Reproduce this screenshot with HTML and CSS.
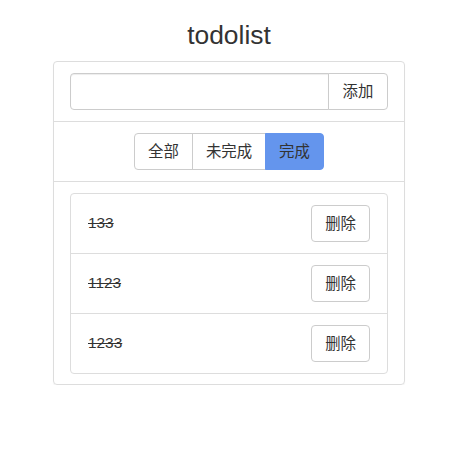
FILE: index.html
```html
<!DOCTYPE html>
<html lang="zh">
<head>
<meta charset="utf-8">
<title>todolist</title>
<link rel="stylesheet" href="styles.css">
</head>
<body>
<div class="wrap">
  <h3 class="title">todolist</h3>
  <div class="panel">
    <div class="panel-body">
      <div class="input-group">
        <input class="form-control" type="text">
        <button class="btn btn-add" type="button">添加</button>
      </div>
    </div>
    <div class="panel-body filters">
      <div class="btn-group">
        <button class="btn" type="button">全部</button>
        <button class="btn" type="button">未完成</button>
        <button class="btn active" type="button">完成</button>
      </div>
    </div>
    <div class="panel-body list-body">
      <ul class="list-group">
        <li class="list-group-item"><span class="done">133</span><button class="btn" type="button">删除</button></li>
        <li class="list-group-item"><span class="done">1123</span><button class="btn" type="button">删除</button></li>
        <li class="list-group-item"><span class="done">1233</span><button class="btn" type="button">删除</button></li>
      </ul>
    </div>
  </div>
</div>
</body>
</html>
```
FILE: styles.css
```css
* { box-sizing: border-box; }
body {
  margin: 0;
  font-family: "Liberation Sans", "Noto Sans CJK SC", sans-serif;
  font-size: 15.4px;
  line-height: 1.43;
  color: #333;
  background: #fff;
}
.wrap {
  width: 352px;
  margin-left: 53px;
}
.title {
  margin: 21px 0 11px;
  font-size: 26.4px;
  font-weight: 400;
  line-height: 29px;
  text-align: center;
}
.panel {
  border: 1px solid #ddd;
  border-radius: 4px;
  box-shadow: 0 1px 1px rgba(0,0,0,.05);
}
.panel-body {
  padding: 11px 16px;
}
.panel-body + .panel-body {
  border-top: 1px solid #ddd;
}
.input-group {
  display: flex;
  height: 37px;
}
.form-control {
  flex: 1;
  min-width: 0;
  height: 37px;
  margin: 0;
  border: 1px solid #ccc;
  border-radius: 4px 0 0 4px;
  box-shadow: inset 0 1px 1px rgba(0,0,0,.075);
  font: inherit;
  padding: 6px 13px;
}
.btn {
  height: 37px;
  margin: 0;
  padding: 0 13px;
  border: 1px solid #ccc;
  border-radius: 4px;
  background: #fff;
  color: #333;
  font-family: inherit;
  font-size: 15.4px;
  line-height: 1;
}
.btn-add {
  width: 60px;
  margin-left: -1px;
  border-radius: 0 4px 4px 0;
}
.filters {
  display: flex;
  justify-content: center;
}
.btn-group {
  display: flex;
}
.btn-group .btn {
  border-radius: 0;
}
.btn-group .btn + .btn {
  margin-left: -1px;
}
.btn-group .btn:first-child {
  border-radius: 4px 0 0 4px;
}
.btn-group .btn:last-child {
  border-radius: 0 4px 4px 0;
}
.btn-group .btn.active {
  background: #6495ed;
  border-color: #6495ed;
  color: #333;
}
.list-body {
  padding-bottom: 10px;
}
.list-group {
  list-style: none;
  margin: 0;
  padding: 0;
}
.list-group-item {
  display: flex;
  align-items: center;
  justify-content: space-between;
  padding: 11px 17px;
  margin-bottom: -1px;
  border: 1px solid #ddd;
}
.list-group-item:first-child {
  border-radius: 4px 4px 0 0;
}
.list-group-item:last-child {
  margin-bottom: 0;
  border-radius: 0 0 4px 4px;
}
.done {
  text-decoration: line-through;
}
```
